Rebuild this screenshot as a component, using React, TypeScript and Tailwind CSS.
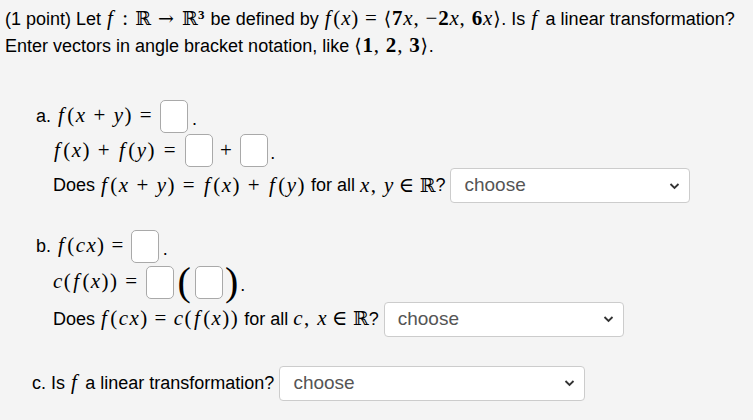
import React from "react";

const mf = { fontFamily: '"Liberation Serif","DejaVu Serif",serif' } as React.CSSProperties;
const df = { fontFamily: '"DejaVu Serif","Liberation Serif",serif' } as React.CSSProperties;

function M({ children, t = "tracking-[1.4px]" }: { children: React.ReactNode; t?: string }) {
  return (
    <span className={`text-[21px] text-black whitespace-nowrap ${t}`} style={mf}>
      {children}
    </span>
  );
}
function I({ children }: { children: React.ReactNode }) {
  return <span className="italic">{children}</span>;
}
function F() {
  return <span className="italic ml-[1px] mr-[2px]">f</span>;
}
function B({ children }: { children: React.ReactNode }) {
  return <span className="font-bold">{children}</span>;
}
function R() {
  return (
    <span className="text-[19px] tracking-normal" style={df}>
      ℝ
    </span>
  );
}
function Op({ children, m = "mx-[7px]" }: { children: React.ReactNode; m?: string }) {
  return <span className={m}>{children}</span>;
}
function Br({ children }: { children: React.ReactNode }) {
  return (
    <span style={df} className="text-[19px]">
      {children}
    </span>
  );
}
function Box() {
  return <span className="inline-block shrink-0 w-[28px] h-[33px] bg-white border border-[#a9a9a9] rounded-[5px] align-middle" />;
}
function Sel({ w }: { w: string }) {
  return (
    <span className={`inline-flex items-center justify-between h-[35px] bg-white border border-[#cccccc] rounded-[4px] pl-[13px] pr-[9px] align-middle ${w}`}>
      <span className="text-[19px] text-[#555555]">choose</span>
      <svg width="11" height="8" viewBox="0 0 11 8">
        <path d="M1.5 2 L5.5 6 L9.5 2" fill="none" stroke="#333" strokeWidth="1.8" />
      </svg>
    </span>
  );
}

export default function App() {
  return (
    <div
      className="w-[753px] h-[420px] bg-[#f4f4f4] text-black text-[18px] overflow-hidden"
      style={{ fontFamily: '"Liberation Sans",Arial,sans-serif' }}
    >
      <div className="pl-[5px] pt-[5px] leading-[26px]">
        <div className="whitespace-nowrap">
          (1 point) Let{" "}
          <M t="tracking-[1.2px]">
            <F />
            <Op m="mx-[6px]">:</Op>
            <R />
            <Op m="mx-[7px]"><span style={df} className="text-[19px]">→</span></Op>
            <R />
            <sup className="text-[13px] font-bold">3</sup>
          </M>{" "}
          be defined by{" "}
          <M t="tracking-[0.8px]">
            <F />(<I>x</I>)<Op m="mx-[6px]">=</Op>
            <Br>⟨</Br>
            <B>7</B><I>x</I>, −<B>2</B><I>x</I>, <B>6</B><I>x</I>
            <Br>⟩</Br>
          </M>
          . Is <M><F /></M> a linear transformation?
        </div>
        <div>
          Enter vectors in angle bracket notation, like{" "}
          <M t="tracking-[0.8px]">
            <Br>⟨</Br>
            <B>1</B>, <B>2</B>, <B>3</B>
            <Br>⟩</Br>
          </M>
          .
        </div>
      </div>

      {/* part a */}
      <div className="mt-[40px] pl-[36px] flex flex-col">
        <div className="h-[34px] flex items-center">
          <span className="w-[21px]">a.</span>
          <M>
            <F />(<I>x</I><Op>+</Op><I>y</I>)<Op>=</Op>
          </M>
          <Box />
          <span className="ml-[4px] mt-[6px]">.</span>
        </div>
        <div className="h-[35px] flex items-center pl-[17px]">
          <M>
            <F />(<I>x</I>)<Op>+</Op><F />(<I>y</I>)<Op m="mx-[8px]">=</Op>
          </M>
          <Box />
          <M><span className="mx-[7px]">+</span></M>
          <Box />
          <span className="ml-[2px] mt-[6px]">.</span>
        </div>
        <div className="h-[35px] flex items-center pl-[17px] whitespace-nowrap">
          <span>Does&nbsp;</span>
          <M>
            <F />(<I>x</I><Op>+</Op><I>y</I>)<Op>=</Op><F />(<I>x</I>)<Op>+</Op><F />(<I>y</I>)
          </M>
          <span>&nbsp;for all&nbsp;</span>
          <M>
            <I>x</I>, <I>y</I><Op m="mx-[4px]">∈</Op><R />
          </M>
          <span>?&nbsp;</span>
          <Sel w="w-[240px] shrink-0" />
        </div>
      </div>

      {/* part b */}
      <div className="mt-[25px] pl-[36px] flex flex-col">
        <div className="h-[36px] flex items-center">
          <span className="w-[21px]">b.</span>
          <M>
            <F />(<I>cx</I>)<Op m="mx-[6px]">=</Op>
          </M>
          <Box />
          <span className="ml-[4px] mt-[6px]">.</span>
        </div>
        <div className="h-[36px] flex items-center pl-[17px]">
          <M>
            <I>c</I>(<F />(<I>x</I>))<Op>=</Op>
          </M>
          <Box />
          <span className="text-[40px] leading-none ml-[4px] mr-[4px] font-light" style={mf}>(</span>
          <Box />
          <span className="text-[40px] leading-none ml-[2px] font-light" style={mf}>)</span>
          <span className="ml-[2px] mt-[6px]">.</span>
        </div>
        <div className="h-[38px] flex items-center pl-[17px] whitespace-nowrap">
          <span>Does&nbsp;</span>
          <M>
            <F />(<I>cx</I>)<Op m="mx-[6px]">=</Op><I>c</I>(<F />(<I>x</I>))
          </M>
          <span>&nbsp;for all&nbsp;</span>
          <M>
            <I>c</I>, <I>x</I><Op m="mx-[4px]">∈</Op><R />
          </M>
          <span>?&nbsp;</span>
          <Sel w="w-[240px] shrink-0" />
        </div>
      </div>

      {/* part c */}
      <div className="mt-[27px] pl-[32px] flex items-center h-[36px] whitespace-nowrap">
        <span>c. Is&nbsp;</span>
        <M><F /></M>
        <span>&nbsp;a linear transformation?&nbsp;</span>
        <Sel w="w-[306px] shrink-0" />
      </div>
    </div>
  );
}
